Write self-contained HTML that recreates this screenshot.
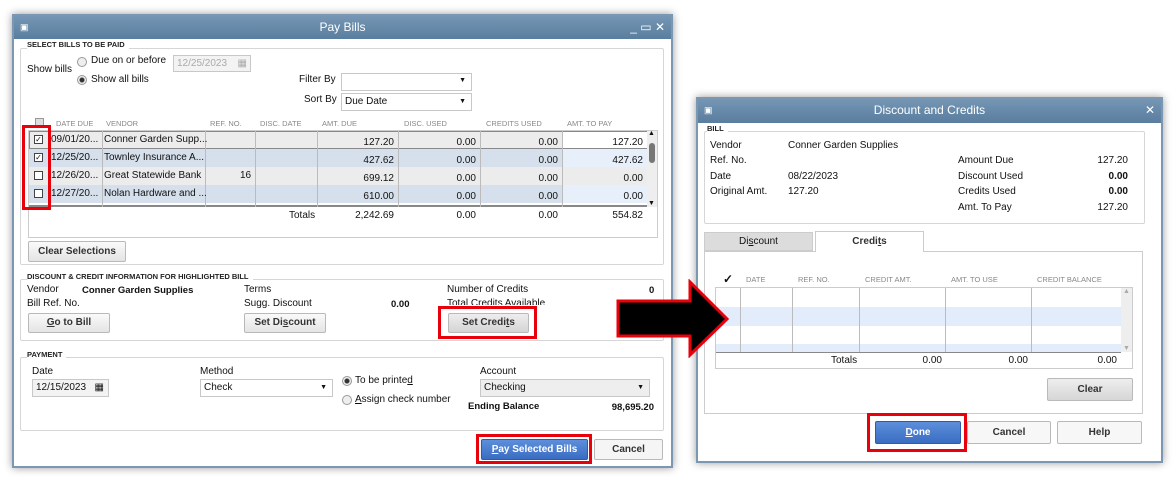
<!DOCTYPE html><html><head><style>
*{box-sizing:border-box;margin:0;padding:0}
body{width:1176px;height:477px;background:#fff;position:relative;overflow:hidden;font-family:"Liberation Sans",Arial,sans-serif;font-size:10px;color:#111}
.a{position:absolute;white-space:nowrap}
.win{position:absolute;background:#fff;border:2px solid #6f8fac;box-shadow:0 0 8px rgba(0,0,0,.4)}
.tb{position:absolute;left:0;right:0;top:0;height:23px;background:linear-gradient(#7596b4,#5a7e9f);color:#fff;font-size:12px;text-align:center;line-height:22px}
.grp{position:absolute;border:1px solid #d6d6d6;border-radius:2px}
.lbl{position:absolute;font-size:7.5px;font-weight:bold;background:#fff;padding-right:4px;color:#222}
.btn{position:absolute;border:1px solid #b9b9b9;border-radius:2px;background:linear-gradient(#fafafa,#e4e4e4);text-align:center;font-weight:bold;color:#333;font-size:10px}
.blue{background:linear-gradient(#5d8fdc,#3a6cc2);color:#fff;border-color:#2f5ca8}
.red{position:absolute;border:3px solid #e8000b}
.fld{position:absolute;border:1px solid #c8c8c8;background:#f3f3f3;padding-left:3px}
.hd{position:absolute;font-size:7.5px;color:#888}
.r{text-align:right}
.cb{position:absolute;width:9px;height:9px;border:1px solid #444;background:#fff;font-size:8px;line-height:7px;text-align:center}
.rad{position:absolute;width:10px;height:10px;border:1px solid #999;border-radius:50%;background:#eee}
</style></head><body>

<div class="win" style="left:12px;top:14px;width:661px;height:454px;border-color:#7b97b2">
<div class="tb">Pay Bills<span style="position:absolute;left:6px;top:0;font-size:9px">▣</span><span style="position:absolute;right:6px;top:0;font-size:12px">_ ▭ ✕</span></div>
</div>

<div class="grp" style="left:20px;top:48px;width:644px;height:217px"></div>
<div class="lbl" style="left:27px;top:40px">SELECT BILLS TO BE PAID</div>
<div class="a" style="left:27px;top:64px">Show bills</div>
<div class="rad" style="left:77px;top:57px"></div><div class="a" style="left:91px;top:55px">Due on or before</div>
<div class="rad" style="left:77px;top:75px;background:radial-gradient(#333 2px,#eee 3px)"></div><div class="a" style="left:91px;top:74px">Show all bills</div>
<div class="fld" style="left:173px;top:55px;width:78px;height:17px;color:#aaa;line-height:15px">12/25/2023 <span style="float:right;padding-right:3px">▦</span></div>
<div class="a" style="left:299px;top:74px">Filter By</div>
<div class="fld" style="left:341px;top:73px;width:131px;height:18px;background:#fff"><span style="position:absolute;right:5px;top:3px;font-size:7px">▼</span></div>
<div class="a" style="left:304px;top:94px">Sort By</div>
<div class="fld" style="left:341px;top:93px;width:131px;height:18px;background:#fff;line-height:16px">Due Date<span style="position:absolute;right:5px;top:0;font-size:7px">▼</span></div>

<div class="cb" style="left:35px;top:118px;border-color:#999;background:#ddd"></div>
<div class="hd" style="left:56px;top:119px">DATE DUE</div>
<div class="hd" style="left:106px;top:119px">VENDOR</div>
<div class="hd" style="left:210px;top:119px">REF. NO.</div>
<div class="hd" style="left:260px;top:119px">DISC. DATE</div>
<div class="hd" style="left:322px;top:119px">AMT. DUE</div>
<div class="hd" style="left:404px;top:119px">DISC. USED</div>
<div class="hd" style="left:486px;top:119px">CREDITS USED</div>
<div class="hd" style="left:567px;top:119px">AMT. TO PAY</div>

<div class="a" style="left:28px;top:130px;width:630px;height:108px;border:1px solid #ccc"></div>
<div class="a" style="left:29px;top:131px;width:618px;height:18px;background:#ececec;border:1px solid #888"></div>
<div class="a" style="left:29px;top:149px;width:618px;height:18px;background:#d6e0ec"></div>
<div class="a" style="left:29px;top:167px;width:618px;height:18px;background:#ececec"></div>
<div class="a" style="left:29px;top:185px;width:618px;height:18px;background:#d6e0ec"></div>
<div class="a" style="left:562px;top:149px;width:85px;height:18px;background:#e6effa"></div>
<div class="a" style="left:562px;top:185px;width:85px;height:18px;background:#e6effa"></div>
<div class="a" style="left:562px;top:132px;width:85px;height:16px;background:#fff"></div>
<div class="a" style="left:29px;top:205px;width:618px;height:2px;background:#888"></div>
<div class="a" style="left:647px;top:131px;width:10px;height:76px;background:#eee"><div style="position:absolute;left:2px;top:12px;width:6px;height:20px;background:#777;border-radius:3px"></div><div style="position:absolute;top:-1px;left:1px;font-size:7px">▲</div><div style="position:absolute;bottom:0;left:1px;font-size:7px">▼</div></div>
<div class="a" style="left:102px;top:131px;width:1px;height:76px;background:#bbb"></div>
<div class="a" style="left:205px;top:131px;width:1px;height:76px;background:#bbb"></div>
<div class="a" style="left:255px;top:131px;width:1px;height:76px;background:#bbb"></div>
<div class="a" style="left:317px;top:131px;width:1px;height:76px;background:#bbb"></div>
<div class="a" style="left:398px;top:131px;width:1px;height:76px;background:#bbb"></div>
<div class="a" style="left:480px;top:131px;width:1px;height:76px;background:#bbb"></div>
<div class="a" style="left:562px;top:131px;width:1px;height:76px;background:#bbb"></div>

<div class="cb" style="left:34px;top:135px">✓</div><div class="cb" style="left:34px;top:153px">✓</div><div class="cb" style="left:34px;top:171px"></div><div class="cb" style="left:34px;top:189px"></div>
<div class="a" style="left:51px;top:134px;width:50px;overflow:hidden">09/01/20...</div><div class="a" style="left:104px;top:134px">Conner Garden Supp...</div>
<div class="a" style="left:51px;top:152px">12/25/20...</div><div class="a" style="left:104px;top:152px">Townley Insurance A...</div>
<div class="a" style="left:51px;top:170px">12/26/20...</div><div class="a" style="left:104px;top:170px">Great Statewide Bank</div><div class="a" style="left:240px;top:170px">16</div>
<div class="a" style="left:51px;top:188px">12/27/20...</div><div class="a" style="left:104px;top:188px">Nolan Hardware and ...</div>
<div class="a r" style="left:318px;top:134px;width:76px;line-height:18px">127.20<br>427.62<br>699.12<br>610.00</div>
<div class="a r" style="left:399px;top:134px;width:77px;line-height:18px">0.00<br>0.00<br>0.00<br>0.00</div>
<div class="a r" style="left:481px;top:134px;width:77px;line-height:18px">0.00<br>0.00<br>0.00<br>0.00</div>
<div class="a r" style="left:563px;top:134px;width:80px;line-height:18px">127.20<br>427.62<br>0.00<br>0.00</div>
<div class="a" style="left:289px;top:210px">Totals</div>
<div class="a r" style="left:318px;top:210px;width:76px">2,242.69</div>
<div class="a r" style="left:399px;top:210px;width:77px">0.00</div>
<div class="a r" style="left:481px;top:210px;width:77px">0.00</div>
<div class="a r" style="left:563px;top:210px;width:80px">554.82</div>
<div class="red" style="left:22px;top:125px;width:29px;height:85px"></div>
<div class="btn" style="left:28px;top:241px;width:98px;height:21px;line-height:19px">Clear Selections</div>

<div class="grp" style="left:20px;top:279px;width:644px;height:62px"></div>
<div class="lbl" style="left:27px;top:272px">DISCOUNT &amp; CREDIT INFORMATION FOR HIGHLIGHTED BILL</div>
<div class="a" style="left:27px;top:284px">Vendor</div><div class="a" style="left:82px;top:285px;font-weight:bold;font-size:9.5px">Conner Garden Supplies</div>
<div class="a" style="left:27px;top:298px">Bill Ref. No.</div>
<div class="btn" style="left:28px;top:313px;width:82px;height:20px;line-height:18px"><u>G</u>o to Bill</div>
<div class="a" style="left:244px;top:284px">Terms</div><div class="a" style="left:244px;top:298px">Sugg. Discount</div><div class="a" style="left:391px;top:299px;font-weight:bold;font-size:9.5px">0.00</div>
<div class="btn" style="left:244px;top:313px;width:82px;height:20px;line-height:18px">Set Di<u>s</u>count</div>
<div class="a" style="left:447px;top:284px">Number of Credits</div><div class="a" style="left:649px;top:285px;font-weight:bold;font-size:9.5px">0</div>
<div class="a" style="left:447px;top:298px;height:7px;overflow:hidden">Total Credits Available</div>
<div class="btn" style="left:448px;top:313px;width:81px;height:20px;line-height:18px;background:linear-gradient(#eee,#d4d4d4)">Set Credi<u>t</u>s</div>
<div class="red" style="left:438px;top:306px;width:99px;height:33px"></div>

<div class="grp" style="left:20px;top:357px;width:644px;height:74px"></div>
<div class="lbl" style="left:27px;top:350px">PAYMENT</div>
<div class="a" style="left:32px;top:366px">Date</div>
<div class="fld" style="left:32px;top:379px;width:77px;height:18px;line-height:16px">12/15/2023<span style="position:absolute;right:4px;top:0">▦</span></div>
<div class="a" style="left:200px;top:366px">Method</div>
<div class="fld" style="left:200px;top:379px;width:133px;height:18px;background:#fff;line-height:16px">Check<span style="position:absolute;right:5px;font-size:7px">▼</span></div>
<div class="rad" style="left:342px;top:376px;background:radial-gradient(#333 2px,#eee 3px)"></div><div class="a" style="left:355px;top:375px">To be printe<u>d</u></div>
<div class="rad" style="left:342px;top:395px"></div><div class="a" style="left:355px;top:394px"><u>A</u>ssign check number</div>
<div class="a" style="left:480px;top:366px">Account</div>
<div class="fld" style="left:480px;top:379px;width:170px;height:18px;line-height:16px;background:#eee">Checking<span style="position:absolute;right:5px;font-size:7px">▼</span></div>
<div class="a" style="left:468px;top:401px;font-weight:bold;font-size:9.5px">Ending Balance</div>
<div class="a r" style="left:560px;top:402px;width:94px;font-weight:bold;font-size:9.5px">98,695.20</div>
<div class="btn blue" style="left:481px;top:439px;width:107px;height:21px;line-height:19px"><u>P</u>ay Selected Bills</div>
<div class="btn" style="left:594px;top:439px;width:69px;height:21px;line-height:19px;background:#f5f5f5">Cancel</div>
<div class="red" style="left:476px;top:434px;width:116px;height:30px"></div>

<div class="win" style="left:696px;top:97px;width:467px;height:366px;border-color:#7b97b2">
<div class="tb" style="height:24px">Discount and Credits<span style="position:absolute;left:6px;font-size:9px">▣</span><span style="position:absolute;right:6px">✕</span></div>
</div>
<div class="grp" style="left:704px;top:131px;width:441px;height:93px"></div>
<div class="lbl" style="left:707px;top:124px">BILL</div>
<div class="a" style="left:710px;top:140px">Vendor</div><div class="a" style="left:788px;top:140px">Conner Garden Supplies</div>
<div class="a" style="left:710px;top:155px">Ref. No.</div>
<div class="a" style="left:710px;top:171px">Date</div><div class="a" style="left:788px;top:171px">08/22/2023</div>
<div class="a" style="left:710px;top:186px">Original Amt.</div><div class="a" style="left:788px;top:186px">127.20</div>
<div class="a" style="left:958px;top:155px">Amount Due</div><div class="a r" style="left:1060px;top:155px;width:68px">127.20</div>
<div class="a" style="left:958px;top:171px">Discount Used</div><div class="a r" style="left:1060px;top:171px;width:68px;font-weight:bold">0.00</div>
<div class="a" style="left:958px;top:186px">Credits Used</div><div class="a r" style="left:1060px;top:186px;width:68px;font-weight:bold">0.00</div>
<div class="a" style="left:958px;top:202px">Amt. To Pay</div><div class="a r" style="left:1060px;top:202px;width:68px">127.20</div>

<div class="a" style="left:704px;top:232px;width:109px;height:19px;background:#dcdcdc;border:1px solid #ccc;text-align:center;line-height:17px">Di<u>s</u>count</div>
<div class="a" style="left:815px;top:231px;width:109px;height:21px;background:#fff;border:1px solid #ccc;border-bottom:none;text-align:center;line-height:19px;font-weight:bold;color:#333">Credi<u>t</u>s</div>
<div class="a" style="left:704px;top:251px;width:439px;height:163px;border:1px solid #ccc"></div>
<div class="a" style="left:816px;top:250px;width:107px;height:2px;background:#fff"></div>
<div class="a" style="left:723px;top:272px;font-size:12px;font-weight:bold">✓</div>
<div class="hd" style="left:746px;top:275px">DATE</div><div class="hd" style="left:798px;top:275px">REF. NO.</div><div class="hd" style="left:865px;top:275px">CREDIT AMT.</div><div class="hd" style="left:951px;top:275px">AMT. TO USE</div><div class="hd" style="left:1037px;top:275px">CREDIT BALANCE</div>
<div class="a" style="left:715px;top:287px;width:418px;height:82px;border:1px solid #ccc"></div>
<div class="a" style="left:716px;top:307px;width:405px;height:19px;background:#e2ecfa"></div>
<div class="a" style="left:716px;top:344px;width:405px;height:8px;background:#e2ecfa"></div>
<div class="a" style="left:716px;top:352px;width:405px;height:1px;background:#888"></div>
<div class="a" style="left:1121px;top:288px;width:11px;height:64px;background:#eee;color:#aaa;font-size:7px"><div style="position:absolute;top:0;left:2px">▲</div><div style="position:absolute;bottom:0;left:2px">▼</div></div>
<div class="a" style="left:740px;top:288px;width:1px;height:64px;background:#bbb"></div>
<div class="a" style="left:792px;top:288px;width:1px;height:64px;background:#bbb"></div>
<div class="a" style="left:859px;top:288px;width:1px;height:64px;background:#bbb"></div>
<div class="a" style="left:945px;top:288px;width:1px;height:64px;background:#bbb"></div>
<div class="a" style="left:1031px;top:288px;width:1px;height:64px;background:#bbb"></div>
<div class="a" style="left:831px;top:355px">Totals</div>
<div class="a r" style="left:880px;top:355px;width:62px">0.00</div>
<div class="a r" style="left:966px;top:355px;width:62px">0.00</div>
<div class="a r" style="left:1055px;top:355px;width:62px">0.00</div>
<div class="btn" style="left:1047px;top:378px;width:86px;height:23px;line-height:21px;background:linear-gradient(#eee,#d6d6d6)">Clear</div>
<div class="btn blue" style="left:875px;top:421px;width:86px;height:23px;line-height:21px"><u>D</u>one</div>
<div class="btn" style="left:967px;top:421px;width:84px;height:23px;line-height:21px;background:#f7f7f7">Cancel</div>
<div class="btn" style="left:1057px;top:421px;width:85px;height:23px;line-height:21px;background:#f7f7f7">Help</div>
<div class="red" style="left:867px;top:413px;width:100px;height:39px"></div>

<svg class="a" style="left:615px;top:279px" width="116" height="79"><polygon points="3,22 75,22 75,3 112,40 75,76 75,57 3,57" fill="#000" stroke="#e8000b" stroke-width="3"/></svg>
</body></html>
